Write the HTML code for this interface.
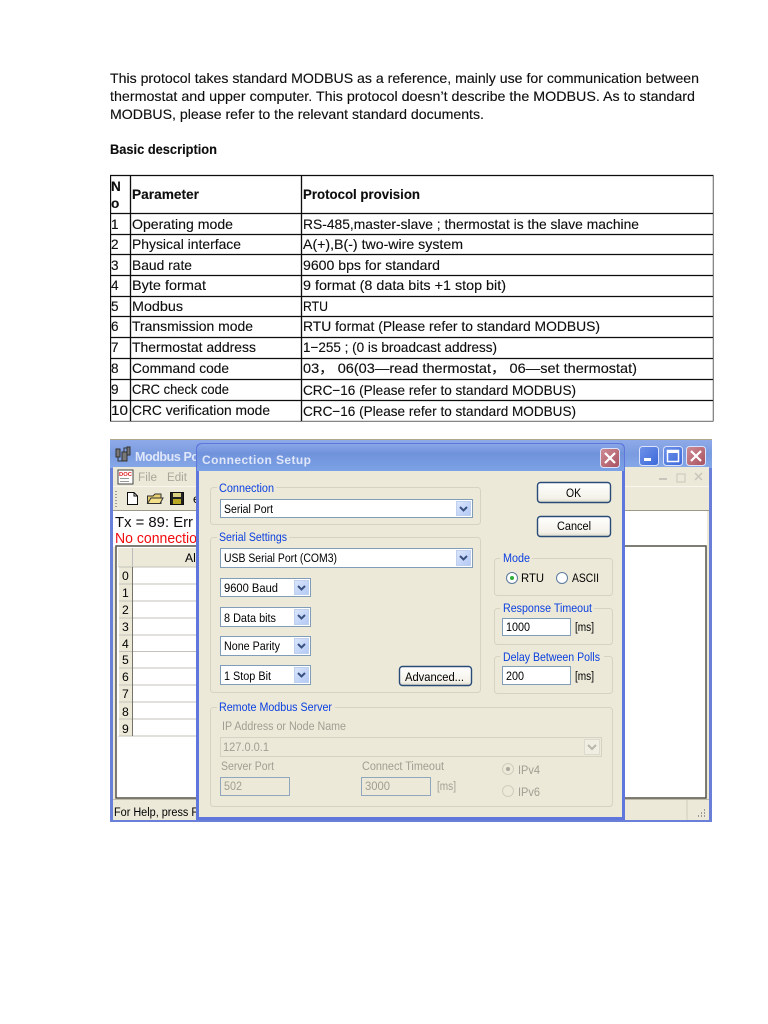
<!DOCTYPE html>
<html><head><meta charset="utf-8"><title>Protocol</title>
<style>
html,body{margin:0;padding:0;background:#fff;width:768px;height:1024px;overflow:hidden}
svg{display:block}
.d{font-family:"Liberation Sans","Noto Sans CJK SC",sans-serif;font-size:13.6px;fill:#0c0c0c;stroke:#0c0c0c;stroke-width:.12px}
.b{font-weight:bold;font-size:13.6px}
.u{font-family:"Liberation Sans",sans-serif;font-size:12.2px;fill:#000}
.bl{fill:#0a40e0}
.g{fill:#a09e92}
.w{font-family:"Liberation Sans",sans-serif;font-weight:bold;font-size:12.5px;fill:#dfe7fa}
</style></head><body>
<svg width="768" height="1024" viewBox="0 0 768 1024" xmlns="http://www.w3.org/2000/svg">
<defs>
<linearGradient id="tb" x1="0" y1="0" x2="0" y2="1"><stop offset="0" stop-color="#8aa6e8"/><stop offset=".35" stop-color="#7092dc"/><stop offset="1" stop-color="#7ca2e6"/></linearGradient>
<linearGradient id="wb" x1="0" y1="0" x2="0" y2="1"><stop offset="0" stop-color="#8ea9e8"/><stop offset=".5" stop-color="#7b9be0"/><stop offset="1" stop-color="#86a8e8"/></linearGradient>
<linearGradient id="cb" x1="0" y1="0" x2="1" y2="1"><stop offset="0" stop-color="#dbe6fb"/><stop offset="1" stop-color="#b2c8f5"/></linearGradient>
<linearGradient id="btn" x1="0" y1="0" x2="0" y2="1"><stop offset="0" stop-color="#fff"/><stop offset=".8" stop-color="#f3f1e8"/><stop offset="1" stop-color="#dcd8c8"/></linearGradient>
<linearGradient id="rd" x1="0" y1="0" x2="1" y2="1"><stop offset="0" stop-color="#cf8e96"/><stop offset="1" stop-color="#a8505e"/></linearGradient>
<linearGradient id="bu" x1="0" y1="0" x2="1" y2="1"><stop offset="0" stop-color="#6f93ea"/><stop offset="1" stop-color="#3c68d8"/></linearGradient>
<filter id="s" x="0" y="0" width="100%" height="100%"><feGaussianBlur stdDeviation="0.25"/></filter>
<filter id="t" x="0" y="0" width="100%" height="100%"><feGaussianBlur stdDeviation="0.3"/></filter>
</defs>

<g filter="url(#t)">
<text class="d" x="110" y="83" textLength="589" lengthAdjust="spacingAndGlyphs">This protocol takes standard MODBUS as a reference, mainly use for communication between</text>
<text class="d" x="110" y="101" textLength="585" lengthAdjust="spacingAndGlyphs">thermostat and upper computer. This protocol doesn’t describe the MODBUS. As to standard</text>
<text class="d" x="110" y="119" textLength="374" lengthAdjust="spacingAndGlyphs">MODBUS, please refer to the relevant standard documents.</text>
<text class="d b" x="110" y="154" textLength="107" lengthAdjust="spacingAndGlyphs">Basic description</text>

<g fill="none" stroke="#111" stroke-width="1.300">
<path d="M110.500 175.500H713.500V421.500H110.500Z"/>
<path d="M110.500 213.500H713.500M110.500 234.500H713.500M110.500 254.500H713.500M110.500 275.500H713.500M110.500 296.500H713.500M110.500 316.500H713.500M110.500 337.500H713.500M110.500 358.500H713.500M110.500 379.500H713.500M110.500 400.500H713.500"/>
<path d="M130.500 175.500V421.500M301.500 175.500V421.500"/>
</g>
<text class="d b" x="111" y="191">N</text>
<text class="d b" x="111" y="208">o</text>
<text class="d b" x="132" y="199" textLength="67" lengthAdjust="spacingAndGlyphs">Parameter</text>
<text class="d b" x="303" y="199" textLength="117" lengthAdjust="spacingAndGlyphs">Protocol provision</text>

<text class="d" x="111" y="229">1</text><text class="d" x="132" y="229" textLength="101" lengthAdjust="spacingAndGlyphs">Operating mode</text><text class="d" x="303" y="229" textLength="336" lengthAdjust="spacingAndGlyphs">RS-485,master-slave ; thermostat is the slave machine</text>
<text class="d" x="111" y="249">2</text><text class="d" x="132" y="249" textLength="109" lengthAdjust="spacingAndGlyphs">Physical interface</text><text class="d" x="303" y="249" textLength="160" lengthAdjust="spacingAndGlyphs">A(+),B(-) two-wire system</text>
<text class="d" x="111" y="270">3</text><text class="d" x="132" y="270" textLength="60" lengthAdjust="spacingAndGlyphs">Baud rate</text><text class="d" x="303" y="270" textLength="137" lengthAdjust="spacingAndGlyphs">9600 bps for standard</text>
<text class="d" x="111" y="290">4</text><text class="d" x="132" y="290" textLength="74" lengthAdjust="spacingAndGlyphs">Byte format</text><text class="d" x="303" y="290" textLength="203" lengthAdjust="spacingAndGlyphs">9 format (8 data bits +1 stop bit)</text>
<text class="d" x="111" y="311">5</text><text class="d" x="132" y="311" textLength="51" lengthAdjust="spacingAndGlyphs">Modbus</text><text class="d" x="303" y="311" textLength="25" lengthAdjust="spacingAndGlyphs">RTU</text>
<text class="d" x="111" y="331">6</text><text class="d" x="132" y="331" textLength="121" lengthAdjust="spacingAndGlyphs">Transmission mode</text><text class="d" x="303" y="331" textLength="297" lengthAdjust="spacingAndGlyphs">RTU format (Please refer to standard MODBUS)</text>
<text class="d" x="111" y="352">7</text><text class="d" x="132" y="352" textLength="124" lengthAdjust="spacingAndGlyphs">Thermostat address</text><text class="d" x="303" y="352" textLength="194" lengthAdjust="spacingAndGlyphs">1−255 ; (0 is broadcast address)</text>
<text class="d" x="111" y="373">8</text><text class="d" x="132" y="373" textLength="97" lengthAdjust="spacingAndGlyphs">Command code</text><text class="d" x="303" y="373" textLength="334" lengthAdjust="spacingAndGlyphs">03， 06(03—read thermostat，  06—set thermostat)</text>
<text class="d" x="111" y="394">9</text><text class="d" x="132" y="394" textLength="97" lengthAdjust="spacingAndGlyphs">CRC check code</text><text class="d" x="303" y="395" textLength="273" lengthAdjust="spacingAndGlyphs">CRC−16 (Please refer to standard MODBUS)</text>
<text class="d" x="111" y="415" textLength="17" lengthAdjust="spacingAndGlyphs">10</text><text class="d" x="132" y="415" textLength="138" lengthAdjust="spacingAndGlyphs">CRC verification mode</text><text class="d" x="303" y="416" textLength="273" lengthAdjust="spacingAndGlyphs">CRC−16 (Please refer to standard MODBUS)</text>
</g>

<g filter="url(#s)">
<!-- outer window -->
<rect x="110" y="439" width="602" height="383" fill="#6a80d8"/>
<rect x="110" y="439" width="602" height="1" fill="#b0a888"/>
<rect x="110" y="440" width="602" height="28" fill="url(#wb)"/>
<rect x="113" y="467" width="596" height="353" fill="#ece9d8"/>
<rect x="113" y="486" width="596" height="1" fill="#f8f6ee"/>
<rect x="113" y="510" width="596" height="1" fill="#9a9888"/>
<rect x="113" y="511" width="594" height="36" fill="#fff"/>
<rect x="116" y="546" width="590" height="252" fill="#fff" stroke="#55534a" stroke-width="1.500"/>
<rect x="113" y="799" width="596" height="1" fill="#bcb9a8"/>

<!-- app icon -->
<g stroke="#333" fill="#777"><rect x="116" y="449" width="4" height="8"/><rect x="122" y="452" width="5" height="9"/><rect x="127" y="447" width="3" height="8"/><path d="M118 457V461H122M124 452V448H127" fill="none"/></g>
<text class="w" x="135" y="461" textLength="64" lengthAdjust="spacing">Modbus Po</text>

<!-- menu -->
<rect x="118" y="470" width="15" height="14" fill="#fff" stroke="#444"/>
<text x="119" y="476" font-family="Liberation Sans,sans-serif" font-weight="bold" font-size="5" fill="#d22" textLength="13" lengthAdjust="spacingAndGlyphs">DOC</text>
<path d="M120 478.500h9M120 481.500h9" stroke="#999"/>
<text class="u" x="138" y="481" style="fill:#a8a698" textLength="19" lengthAdjust="spacingAndGlyphs">File</text>
<text class="u" x="167" y="481" style="fill:#a8a698" textLength="20" lengthAdjust="spacingAndGlyphs">Edit</text>

<!-- toolbar -->
<path d="M116 491v16" stroke="#999" stroke-width="2" stroke-dasharray="1 2"/>
<path d="M127.500 492.500H134L137.500 496V504.500H127.500Z" fill="#fff" stroke="#111"/>
<path d="M134 492.500V496H137.500" fill="none" stroke="#111"/>
<path d="M147.500 503.500V496H153L155 494H161V503.500Z" fill="#e8d070" stroke="#333"/>
<path d="M147.500 503.500L151 498H163L160 503.500Z" fill="#f4e088" stroke="#333"/>
<rect x="170.500" y="492.500" width="13" height="12" fill="#222" stroke="#111"/>
<rect x="173" y="493" width="8" height="4" fill="#d8d080"/>
<rect x="173" y="499" width="8" height="5" fill="#b8a820"/>
<text class="u" x="193" y="503">e</text>

<!-- text area -->
<text x="115" y="527" font-family="Liberation Sans,sans-serif" font-size="15" fill="#111" textLength="78" lengthAdjust="spacingAndGlyphs">Tx = 89: Err</text>
<text x="115" y="543" font-family="Liberation Sans,sans-serif" font-size="15" fill="#f00810" textLength="82" lengthAdjust="spacingAndGlyphs">No connectio</text>

<!-- grid -->
<rect x="118" y="548" width="80" height="19" fill="#ece9d8"/>
<rect x="132" y="548" width="1" height="19" fill="#bbb"/>
<text class="u" x="185" y="562">Ali</text>
<rect x="118" y="567" width="14" height="169" fill="#ece9d8"/>
<path d="M118 567H197M118 584H197M118 601H197M118 618H197M118 635H197M118 651.500H197M118 668H197M118 685H197M118 702H197M118 719H197M118 736H197" stroke="#c4c2b8" stroke-width="1"/>
<path d="M132.500 567V736" stroke="#77756a" stroke-width="1"/>
<path d="M118.500 567V736" stroke="#fff" stroke-width="1"/>
<g><text class="u" x="122" y="580">0</text><text class="u" x="122" y="597">1</text><text class="u" x="122" y="614">2</text><text class="u" x="122" y="631">3</text><text class="u" x="122" y="648">4</text><text class="u" x="122" y="664">5</text><text class="u" x="122" y="681">6</text><text class="u" x="122" y="698">7</text><text class="u" x="122" y="716">8</text><text class="u" x="122" y="733">9</text></g>
<text class="u" x="114" y="816" textLength="84" lengthAdjust="spacingAndGlyphs">For Help, press F</text>

<!-- outer right controls -->
<rect x="639.500" y="446.500" width="19" height="19" rx="3" fill="url(#bu)" stroke="#dbe4fa"/>
<rect x="644" y="458" width="7" height="3" fill="#fff"/>
<rect x="663.500" y="446.500" width="19" height="19" rx="3" fill="url(#bu)" stroke="#dbe4fa"/>
<rect x="667.500" y="450.500" width="11" height="11" fill="none" stroke="#fff" stroke-width="1.500"/><rect x="667" y="450" width="12" height="3" fill="#fff"/>
<rect x="686.500" y="446.500" width="19" height="19" rx="3" fill="url(#rd)" stroke="#dbe4fa"/>
<path d="M691 451L701 461M701 451L691 461" stroke="#fff" stroke-width="2.200"/>
<path d="M659 479h8" stroke="#c8c6ba" stroke-width="2"/>
<rect x="677" y="474" width="8" height="8" fill="none" stroke="#c8c6ba"/>
<path d="M695 473l7 7m0-7l-7 7" stroke="#c8c6ba" stroke-width="1.500"/>
<path d="M698 816h1M701 816h1M704 816h1M701 813h1M704 813h1M704 810h1" stroke="#999" stroke-width="2"/>
<path d="M687 800v20" stroke="#d0cdbc"/>

<!-- dialog -->
<path d="M196 820V449Q196 443 202 443H619Q625 443 625 449V820Z" fill="#5f76dc"/>
<path d="M197 471V450Q197 444 203 444H618Q624 444 624 450V471Z" fill="url(#tb)"/>
<rect x="199" y="471" width="423" height="346" fill="#ece9d8"/>
<text x="202" y="464" font-family="Liberation Sans,sans-serif" font-weight="bold" font-size="12" fill="#dfe7f8" textLength="109" lengthAdjust="spacing">Connection Setup</text>
<rect x="600.500" y="448.500" width="19" height="19" rx="3" fill="url(#rd)" stroke="#dbe4fa"/>
<path d="M605 453L615 463M615 453L605 463" stroke="#fff" stroke-width="2.200"/>

<!-- group boxes -->
<g fill="none" stroke="#d6d3c2" stroke-width="1">
<rect x="210.500" y="487.500" width="270" height="37" rx="3"/>
<rect x="210.500" y="537.500" width="270" height="155" rx="3"/>
<rect x="494.500" y="558.500" width="118" height="37" rx="3"/>
<rect x="494.500" y="608.500" width="118" height="36" rx="3"/>
<rect x="494.500" y="656.500" width="118" height="37" rx="3"/>
<rect x="210.500" y="707.500" width="402" height="99" rx="3"/>
</g>
<rect x="217" y="484" width="59" height="7" fill="#ece9d8"/>
<rect x="217" y="534" width="72" height="7" fill="#ece9d8"/>
<rect x="500" y="555" width="32" height="7" fill="#ece9d8"/>
<rect x="500" y="605" width="94" height="7" fill="#ece9d8"/>
<rect x="500" y="653" width="104" height="7" fill="#ece9d8"/>
<rect x="217" y="704" width="118" height="7" fill="#ece9d8"/>
<text class="u bl" x="219" y="492" textLength="55" lengthAdjust="spacingAndGlyphs">Connection</text>
<text class="u bl" x="219" y="541" textLength="68" lengthAdjust="spacingAndGlyphs">Serial Settings</text>
<text class="u bl" x="503" y="562" textLength="27" lengthAdjust="spacingAndGlyphs">Mode</text>
<text class="u bl" x="503" y="612" textLength="89" lengthAdjust="spacingAndGlyphs">Response Timeout</text>
<text class="u bl" x="503" y="661" textLength="97" lengthAdjust="spacingAndGlyphs">Delay Between Polls</text>
<text class="u bl" x="219" y="711" textLength="113" lengthAdjust="spacingAndGlyphs">Remote Modbus Server</text>

<!-- combos -->
<g fill="#fff" stroke="#7f9db9" stroke-width="1">
<rect x="220.500" y="499.500" width="252" height="18"/>
<rect x="220.500" y="548.500" width="252" height="19"/>
<rect x="220.500" y="578.500" width="90" height="18"/>
<rect x="220.500" y="607.500" width="90" height="19"/>
<rect x="220.500" y="636.500" width="90" height="19"/>
<rect x="220.500" y="665.500" width="90" height="19"/>
</g>
<g fill="url(#cb)" stroke="#bfcfee">
<rect x="456.500" y="501.500" width="14" height="14"/>
<rect x="456.500" y="550.500" width="14" height="15"/>
<rect x="294.500" y="580.500" width="14" height="14"/>
<rect x="294.500" y="609.500" width="14" height="15"/>
<rect x="294.500" y="638.500" width="14" height="15"/>
<rect x="294.500" y="667.500" width="14" height="15"/>
</g>
<g fill="none" stroke="#39507f" stroke-width="2">
<path d="M460 507l3.500 3.500 3.500-3.500"/>
<path d="M460 556l3.500 3.500 3.500-3.500"/>
<path d="M298 586l3.500 3.500 3.500-3.500"/>
<path d="M298 615l3.500 3.500 3.500-3.500"/>
<path d="M298 644l3.500 3.500 3.500-3.500"/>
<path d="M298 673l3.500 3.500 3.500-3.500"/>
</g>
<text class="u" x="224" y="513" textLength="49" lengthAdjust="spacingAndGlyphs">Serial Port</text>
<text class="u" x="224" y="562" textLength="113" lengthAdjust="spacingAndGlyphs">USB Serial Port (COM3)</text>
<text class="u" x="224" y="592" textLength="54" lengthAdjust="spacingAndGlyphs">9600 Baud</text>
<text class="u" x="224" y="622" textLength="52" lengthAdjust="spacingAndGlyphs">8 Data bits</text>
<text class="u" x="224" y="650" textLength="56" lengthAdjust="spacingAndGlyphs">None Parity</text>
<text class="u" x="224" y="680" textLength="47" lengthAdjust="spacingAndGlyphs">1 Stop Bit</text>

<!-- buttons -->
<g fill="url(#btn)" stroke="#2a4c78" stroke-width="1.400">
<rect x="537.500" y="482.500" width="73" height="20" rx="3"/>
<rect x="537.500" y="516.500" width="73" height="20" rx="3"/>
<rect x="399.500" y="666.500" width="72" height="19" rx="3"/>
</g>
<text class="u" x="566" y="497" textLength="15" lengthAdjust="spacingAndGlyphs">OK</text>
<text class="u" x="557" y="530" textLength="34" lengthAdjust="spacingAndGlyphs">Cancel</text>
<text class="u" x="405" y="681" textLength="59" lengthAdjust="spacingAndGlyphs">Advanced...</text>

<!-- radios -->
<circle cx="512" cy="578" r="5.500" fill="#fff" stroke="#5b7a9e"/><circle cx="512" cy="578" r="2" fill="#2fae3c"/>
<circle cx="562" cy="578" r="5.500" fill="#fff" stroke="#5b7a9e"/>
<text class="u" x="521" y="582" textLength="23" lengthAdjust="spacingAndGlyphs">RTU</text>
<text class="u" x="572" y="582" textLength="27" lengthAdjust="spacingAndGlyphs">ASCII</text>

<!-- edits -->
<rect x="502.500" y="618.500" width="68" height="17" fill="#fff" stroke="#7f9db9"/>
<rect x="502.500" y="666.500" width="68" height="18" fill="#fff" stroke="#7f9db9"/>
<text class="u" x="506" y="631" textLength="24" lengthAdjust="spacingAndGlyphs">1000</text>
<text class="u" x="506" y="680" textLength="18" lengthAdjust="spacingAndGlyphs">200</text>
<text class="u" x="575" y="631" textLength="19" lengthAdjust="spacingAndGlyphs">[ms]</text>
<text class="u" x="575" y="680" textLength="19" lengthAdjust="spacingAndGlyphs">[ms]</text>

<!-- remote -->
<text class="u g" x="222" y="730" textLength="124" lengthAdjust="spacingAndGlyphs">IP Address or Node Name</text>
<rect x="220.500" y="737.500" width="381" height="19" fill="#ece9d8" stroke="#d4d2c2"/>
<rect x="584.500" y="739.500" width="15" height="15" fill="#f0eee2" stroke="#dcdacc"/>
<path d="M588 745l4 4 4-4" fill="none" stroke="#b8b6a8" stroke-width="2"/>
<text class="u g" x="223" y="751" textLength="46" lengthAdjust="spacingAndGlyphs">127.0.0.1</text>
<text class="u g" x="221" y="770" textLength="53" lengthAdjust="spacingAndGlyphs">Server Port</text>
<text class="u g" x="362" y="770" textLength="82" lengthAdjust="spacingAndGlyphs">Connect Timeout</text>
<rect x="220.500" y="777.500" width="69" height="18" fill="#ece9d8" stroke="#8fa7bd"/>
<rect x="361.500" y="777.500" width="69" height="18" fill="#ece9d8" stroke="#8fa7bd"/>
<text class="u g" x="224" y="790" textLength="18" lengthAdjust="spacingAndGlyphs">502</text>
<text class="u g" x="365" y="790" textLength="25" lengthAdjust="spacingAndGlyphs">3000</text>
<text class="u g" x="437" y="790" textLength="19" lengthAdjust="spacingAndGlyphs">[ms]</text>
<circle cx="508" cy="769" r="5.500" fill="#ece9d8" stroke="#d0cebe"/><circle cx="508" cy="769" r="2" fill="#aaa89c"/>
<circle cx="508" cy="791" r="5.500" fill="#ece9d8" stroke="#d0cebe"/>
<text class="u g" x="518" y="774" textLength="22" lengthAdjust="spacingAndGlyphs">IPv4</text>
<text class="u g" x="518" y="796" textLength="22" lengthAdjust="spacingAndGlyphs">IPv6</text>
</g>
</svg>
</body></html>
